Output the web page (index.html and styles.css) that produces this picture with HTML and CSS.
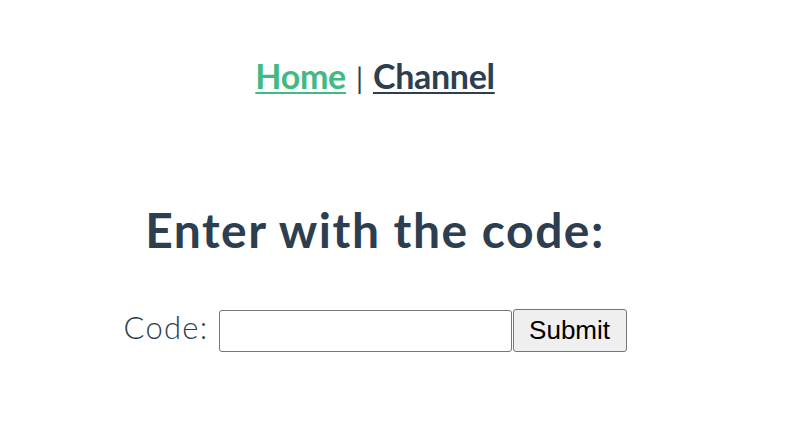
FILE: index.html
```html
<!DOCTYPE html>
<html lang="en">
<head>
<meta charset="utf-8">
<title>Enter with the code</title>
<link rel="stylesheet" href="styles.css">
</head>
<body>
<div class="app">
  <nav class="nav">
    <a href="#" class="nav-link active">Home</a>
    <span class="sep">|</span>
    <a href="#" class="nav-link">Channel</a>
  </nav>
  <main class="page">
    <h1 class="title">Enter with the code:</h1>
    <form class="code-form" onsubmit="return false">
      <label class="code-label" for="code">Code:</label>
      <input class="code-input" id="code" type="text">
      <button class="code-submit" type="submit">Submit</button>
    </form>
  </main>
</div>
</body>
</html>
```

FILE: styles.css
```css
html, body {
  margin: 0;
  padding: 0;
  background: #ffffff;
}

.app {
  width: 750px;
  font-family: Lato, "Noto Sans", sans-serif;
  color: #2c3e50;
  text-align: center;
}

.nav {
  padding-top: 56px;
  font-size: 34px;
  line-height: 1.2;
  display: flex;
  justify-content: center;
  align-items: baseline;
  gap: 10px;
}

.nav-link {
  font-weight: 700;
  color: #2c3e50;
  letter-spacing: -0.3px;
  text-decoration: underline;
  text-decoration-thickness: 2px;
  text-underline-offset: 3px;
}

.nav-link.active {
  color: #42b983;
}

.sep {
  font-weight: 400;
  font-size: 28px;
}

.page {
  padding-top: 104px;
}

.title {
  margin: 0;
  font-size: 48px;
  line-height: 1.2;
  font-weight: 700;
  letter-spacing: 1.5px;
}

.code-form {
  margin-top: 50px;
  display: flex;
  justify-content: center;
  align-items: center;
}

.code-label {
  font-size: 31px;
  font-weight: 300;
  letter-spacing: 1.3px;
  margin-right: 10px;
  padding-bottom: 7px;
}

.code-input {
  box-sizing: border-box;
  width: 293px;
  height: 42px;
  margin: 0 1px 0 0;
  padding: 2px 6px;
  border: 1.5px solid #767676;
  border-radius: 3px;
  font-size: 24px;
}

.code-submit {
  box-sizing: border-box;
  width: 114px;
  height: 43px;
  margin: 0;
  padding: 0;
  border: 1.5px solid #767676;
  border-radius: 3px;
  background: #efefef;
  color: #000000;
  font-family: "Liberation Sans", Arial, sans-serif;
  font-size: 26px;
}
```
